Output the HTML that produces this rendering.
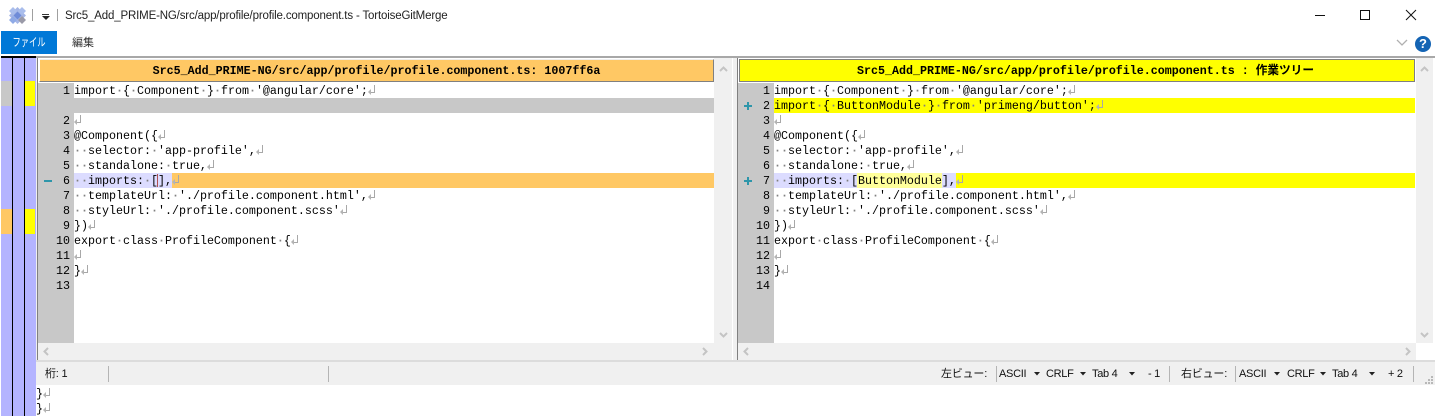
<!DOCTYPE html>
<html lang="ja"><head><meta charset="utf-8"><title>TortoiseGitMerge</title>
<style>
html,body{margin:0;padding:0;background:#fff}
body{position:relative;width:1435px;height:416px;overflow:hidden;font-family:"Liberation Sans","Noto Sans CJK JP",sans-serif;color:#000}
.a{position:absolute}
.t{position:absolute;white-space:pre;font-size:12px;line-height:16px}
.st{position:absolute;white-space:pre;top:366px;line-height:16px;font-size:11px;letter-spacing:-.3px;color:#111}
.jp{position:absolute;white-space:pre;top:366px;line-height:16px;font-size:11px;color:#111;letter-spacing:-.2px}
.c{position:absolute;white-space:pre;font-family:"Liberation Mono","Noto Sans CJK JP",monospace;font-size:11.67px;line-height:15px;height:15px;margin-top:1px}
.n{position:absolute;white-space:pre;font-family:"Liberation Mono",monospace;font-size:11.67px;line-height:15px;height:15px;width:30px;text-align:right;margin-top:1px}
.c u{text-decoration:none;color:#808080;font-weight:bold}
.c i{display:inline-block;position:relative;width:7px;height:15px;vertical-align:top}
.c i::before{content:"";position:absolute;left:1px;top:1px;width:6px;height:8px;border-right:1px solid #a8a8a8;border-bottom:1px solid #a8a8a8;box-sizing:border-box}
.c i::after{content:"";position:absolute;left:0;top:5px;width:0;height:0;border-top:3px solid transparent;border-bottom:3px solid transparent;border-right:3px solid #b4b4b4}
.h{position:absolute;top:59px;height:23px;line-height:23px;text-align:center;font-family:"Liberation Mono","Noto Sans CJK JP",monospace;font-size:11.67px;font-weight:bold;white-space:pre;box-sizing:border-box;border:1px solid #808080;border-top:1px solid #eee;border-left:1px solid #fff}
.s{position:absolute;width:1px;background:#b4b4b4;top:366px;height:16px}
</style></head><body>

<!-- title bar -->
<svg class="a" style="left:8px;top:6px" width="19" height="19" viewBox="0 0 19 19">
<path d="M9.500 1L18 9.500 9.500 18 1 9.500z" fill="#a5b6e6"/>
<path d="M5 1l4 4-4 4-4-4z" fill="#a9bdec"/><path d="M14 1l4 4-4 4-4-4z" fill="#a9bdec"/><path d="M5 10l4 4-4 4-4-4z" fill="#8faae6"/><path d="M14 10l4 4-4 4-4-4z" fill="#9a9aa8"/><path d="M9.500 5.500l4 4-4 4-4-4z" fill="#6f8cd8"/></svg>
<div class="a" style="left:32px;top:9px;width:1px;height:12px;background:#a0a0a0"></div>
<div class="a" style="left:42px;top:14px;width:7px;height:1px;background:#333"></div>
<svg class="a" style="left:42px;top:16px" width="8" height="5"><path d="M0 0h8L4 4z" fill="#222"/></svg>
<div class="a" style="left:57px;top:9px;width:1px;height:12px;background:#a0a0a0"></div>
<div class="t" style="left:65px;top:8px;color:#222;font-size:11.5px;letter-spacing:-.16px">Src5_Add_PRIME-NG/src/app/profile/profile.component.ts - TortoiseGitMerge</div>
<div class="a" style="left:1315px;top:15px;width:10px;height:1px;background:#111"></div>
<div class="a" style="left:1360px;top:10px;width:8px;height:8px;border:1px solid #111;box-sizing:content-box"></div>
<svg class="a" style="left:1405px;top:9px" width="12" height="12"><path d="M1 1l10 10M11 1L1 11" stroke="#111" stroke-width="1" fill="none"/></svg>

<!-- menu -->
<div class="a" style="left:1px;top:31px;width:56px;height:23px;background:#0078d7"></div>
<div class="t" style="left:1px;top:35px;width:56px;text-align:center;color:#fff;font-size:11.5px;transform:scaleX(.72)">ファイル</div>
<div class="t" style="left:72px;top:35px;color:#333;font-size:11px">編集</div>
<svg class="a" style="left:1396px;top:39px" width="12" height="8"><path d="M1 1l5 5 5-5" stroke="#b0b0b0" stroke-width="1.300" fill="none"/></svg>
<div class="a" style="left:1415px;top:36px;width:16px;height:16px;border-radius:50%;background:#1464b4;color:#fff;font-weight:bold;font-size:13px;line-height:16px;text-align:center">?</div>

<!-- top rule -->
<div class="a" style="left:36px;top:56px;width:1399px;height:2px;background:#a8a8a8"></div>

<!-- left location strip -->
<div class="a" style="left:1px;top:56px;width:35px;height:360px;background:#b4b4ff"></div>
<div class="a" style="left:1px;top:56px;width:35px;height:2px;background:#000"></div>
<div class="a" style="left:12px;top:56px;width:1px;height:360px;background:#000"></div>
<div class="a" style="left:24px;top:56px;width:1px;height:360px;background:#000"></div>
<div class="a" style="left:1px;top:81px;width:11px;height:25px;background:#c8c8c8"></div>
<div class="a" style="left:25px;top:81px;width:10px;height:25px;background:#ff0"></div>
<div class="a" style="left:1px;top:209px;width:11px;height:25px;background:#ffc864"></div>
<div class="a" style="left:25px;top:209px;width:10px;height:25px;background:#ff0"></div>

<!-- panes -->
<div class="a" style="left:36px;top:58px;width:2px;height:303px;background:#f0f0f0"></div>
<div class="a" style="left:37px;top:58px;width:1px;height:303px;background:#808080"></div>
<div class="a" style="left:38px;top:83px;width:36px;height:260px;background:#c8c8c8"></div>
<div class="a" style="left:738px;top:83px;width:36px;height:260px;background:#c8c8c8"></div>
<div class="a" style="left:714px;top:58px;width:18px;height:285px;background:#f0f0f0"></div>
<div class="a" style="left:1416px;top:58px;width:17px;height:285px;background:#f0f0f0"></div>
<div class="a" style="left:733px;top:58px;width:4px;height:303px;background:#f0f0f0"></div>
<div class="a" style="left:737px;top:58px;width:1px;height:303px;background:#808080"></div>
<div class="a" style="left:38px;top:343px;width:694px;height:17px;background:#f0f0f0"></div>
<div class="a" style="left:738px;top:343px;width:678px;height:17px;background:#f0f0f0"></div>
<div class="a" style="left:36px;top:360px;width:1399px;height:2px;background:#dcdcdc"></div>

<div class="h" style="left:39px;width:675px;background:#ffc864">Src5_Add_PRIME-NG/src/app/profile/profile.component.ts: 1007ff6a</div>
<div class="h" style="left:739px;width:676px;background:#ff0;border-top:1px solid #808080;border-left:1px solid #808080;padding-left:17px">Src5_Add_PRIME-NG/src/app/profile/profile.component.ts : 作業ツリー</div>

<!-- scroll arrows -->
<svg class="a" style="left:719px;top:66px" width="9" height="6"><path d="M1 5l3.500-3.500L8 5" stroke="#c4c4c4" stroke-width="2" fill="none"/></svg>
<svg class="a" style="left:719px;top:332px" width="9" height="6"><path d="M1 1l3.500 3.500L8 1" stroke="#c4c4c4" stroke-width="2" fill="none"/></svg>
<svg class="a" style="left:1420px;top:66px" width="9" height="6"><path d="M1 5l3.500-3.500L8 5" stroke="#c4c4c4" stroke-width="2" fill="none"/></svg>
<svg class="a" style="left:1420px;top:332px" width="9" height="6"><path d="M1 1l3.500 3.500L8 1" stroke="#c4c4c4" stroke-width="2" fill="none"/></svg>
<svg class="a" style="left:43px;top:347px" width="6" height="9"><path d="M5 1L1.500 4.500 5 8" stroke="#c4c4c4" stroke-width="2" fill="none"/></svg>
<svg class="a" style="left:702px;top:347px" width="6" height="9"><path d="M1 1l3.500 3.500L1 8" stroke="#c4c4c4" stroke-width="2" fill="none"/></svg>
<svg class="a" style="left:743px;top:347px" width="6" height="9"><path d="M5 1L1.500 4.500 5 8" stroke="#c4c4c4" stroke-width="2" fill="none"/></svg>
<svg class="a" style="left:1405px;top:347px" width="6" height="9"><path d="M1 1l3.500 3.500L1 8" stroke="#c4c4c4" stroke-width="2" fill="none"/></svg>

<!-- left highlights -->
<div class="a" style="left:74px;top:83px;width:300px;height:15px;background:#fff"></div>
<div class="a" style="left:74px;top:98px;width:640px;height:15px;background:#c8c8c8"></div>
<div class="a" style="left:74px;top:173px;width:98px;height:15px;background:#dcdcff"></div>
<div class="a" style="left:172px;top:173px;width:542px;height:15px;background:#ffc864"></div>
<div class="a" style="left:44px;top:180px;width:8px;height:2px;background:#2e96aa"></div>
<div class="a" style="left:157px;top:174px;width:1px;height:13px;background:#b05050"></div>

<!-- left numbers -->
<div class="n" style="left:40px;top:83px">1</div>
<div class="n" style="left:40px;top:113px">2</div>
<div class="n" style="left:40px;top:128px">3</div>
<div class="n" style="left:40px;top:143px">4</div>
<div class="n" style="left:40px;top:158px">5</div>
<div class="n" style="left:40px;top:173px">6</div>
<div class="n" style="left:40px;top:188px">7</div>
<div class="n" style="left:40px;top:203px">8</div>
<div class="n" style="left:40px;top:218px">9</div>
<div class="n" style="left:40px;top:233px">10</div>
<div class="n" style="left:40px;top:248px">11</div>
<div class="n" style="left:40px;top:263px">12</div>
<div class="n" style="left:40px;top:278px">13</div>

<!-- left code -->
<div class="c" style="left:74px;top:83px">import<u>·</u>{<u>·</u>Component<u>·</u>}<u>·</u>from<u>·</u>'@angular/core';<i></i></div>
<div class="c" style="left:74px;top:113px"><i></i></div>
<div class="c" style="left:74px;top:128px">@Component({<i></i></div>
<div class="c" style="left:74px;top:143px"><u>··</u>selector:<u>·</u>'app-profile',<i></i></div>
<div class="c" style="left:74px;top:158px"><u>··</u>standalone:<u>·</u>true,<i></i></div>
<div class="c" style="left:74px;top:173px"><u>··</u>imports:<u>·</u>[],<i></i></div>
<div class="c" style="left:74px;top:188px"><u>··</u>templateUrl:<u>·</u>'./profile.component.html',<i></i></div>
<div class="c" style="left:74px;top:203px"><u>··</u>styleUrl:<u>·</u>'./profile.component.scss'<i></i></div>
<div class="c" style="left:74px;top:218px">})<i></i></div>
<div class="c" style="left:74px;top:233px">export<u>·</u>class<u>·</u>ProfileComponent<u>·</u>{<i></i></div>
<div class="c" style="left:74px;top:248px"><i></i></div>
<div class="c" style="left:74px;top:263px">}<i></i></div>

<!-- right highlights -->
<div class="a" style="left:774px;top:98px;width:641px;height:15px;background:#ff0"></div>
<div class="a" style="left:774px;top:173px;width:83px;height:15px;background:#dcdcff"></div>
<div class="a" style="left:857px;top:173px;width:85px;height:15px;background:#ffff9b"></div>
<div class="a" style="left:942px;top:173px;width:14px;height:15px;background:#dcdcff"></div>
<div class="a" style="left:956px;top:173px;width:459px;height:15px;background:#ff0"></div>
<svg class="a" style="left:744px;top:102px" width="8" height="8"><path d="M0 3h3V0h2v3h3v2H5v3H3V5H0z" fill="#2e96aa"/></svg>
<svg class="a" style="left:744px;top:177px" width="8" height="8"><path d="M0 3h3V0h2v3h3v2H5v3H3V5H0z" fill="#2e96aa"/></svg>

<!-- right numbers -->
<div class="n" style="left:740px;top:83px">1</div>
<div class="n" style="left:740px;top:98px">2</div>
<div class="n" style="left:740px;top:113px">3</div>
<div class="n" style="left:740px;top:128px">4</div>
<div class="n" style="left:740px;top:143px">5</div>
<div class="n" style="left:740px;top:158px">6</div>
<div class="n" style="left:740px;top:173px">7</div>
<div class="n" style="left:740px;top:188px">8</div>
<div class="n" style="left:740px;top:203px">9</div>
<div class="n" style="left:740px;top:218px">10</div>
<div class="n" style="left:740px;top:233px">11</div>
<div class="n" style="left:740px;top:248px">12</div>
<div class="n" style="left:740px;top:263px">13</div>
<div class="n" style="left:740px;top:278px">14</div>

<!-- right code -->
<div class="c" style="left:774px;top:83px">import<u>·</u>{<u>·</u>Component<u>·</u>}<u>·</u>from<u>·</u>'@angular/core';<i></i></div>
<div class="c" style="left:774px;top:98px">import<u>·</u>{<u>·</u>ButtonModule<u>·</u>}<u>·</u>from<u>·</u>'primeng/button';<i></i></div>
<div class="c" style="left:774px;top:113px"><i></i></div>
<div class="c" style="left:774px;top:128px">@Component({<i></i></div>
<div class="c" style="left:774px;top:143px"><u>··</u>selector:<u>·</u>'app-profile',<i></i></div>
<div class="c" style="left:774px;top:158px"><u>··</u>standalone:<u>·</u>true,<i></i></div>
<div class="c" style="left:774px;top:173px"><u>··</u>imports:<u>·</u>[ButtonModule],<i></i></div>
<div class="c" style="left:774px;top:188px"><u>··</u>templateUrl:<u>·</u>'./profile.component.html',<i></i></div>
<div class="c" style="left:774px;top:203px"><u>··</u>styleUrl:<u>·</u>'./profile.component.scss'<i></i></div>
<div class="c" style="left:774px;top:218px">})<i></i></div>
<div class="c" style="left:774px;top:233px">export<u>·</u>class<u>·</u>ProfileComponent<u>·</u>{<i></i></div>
<div class="c" style="left:774px;top:248px"><i></i></div>
<div class="c" style="left:774px;top:263px">}<i></i></div>

<!-- status bar -->
<div class="a" style="left:36px;top:362px;width:1399px;height:23px;background:#f0f0f0"></div>
<div class="jp" style="left:45px">桁: 1</div>
<div class="s" style="left:108px"></div>
<div class="s" style="left:328px"></div>
<div class="jp" style="left:941px">左ビュー:</div>
<div class="s" style="left:996px"></div>
<div class="st" style="left:999px">ASCII</div>
<svg class="a" style="left:1034px;top:372px" width="6" height="4"><path d="M0 0h6L3 3.500z" fill="#222"/></svg>
<div class="st" style="left:1046px">CRLF</div>
<svg class="a" style="left:1080px;top:372px" width="6" height="4"><path d="M0 0h6L3 3.500z" fill="#222"/></svg>
<div class="st" style="left:1092px">Tab 4</div>
<svg class="a" style="left:1129px;top:372px" width="6" height="4"><path d="M0 0h6L3 3.500z" fill="#222"/></svg>
<div class="st" style="left:1148px">- 1</div>
<div class="s" style="left:1169px"></div>
<div class="jp" style="left:1181px">右ビュー:</div>
<div class="s" style="left:1235px"></div>
<div class="st" style="left:1239px">ASCII</div>
<svg class="a" style="left:1274px;top:372px" width="6" height="4"><path d="M0 0h6L3 3.500z" fill="#222"/></svg>
<div class="st" style="left:1287px">CRLF</div>
<svg class="a" style="left:1320px;top:372px" width="6" height="4"><path d="M0 0h6L3 3.500z" fill="#222"/></svg>
<div class="st" style="left:1332px">Tab 4</div>
<svg class="a" style="left:1369px;top:372px" width="6" height="4"><path d="M0 0h6L3 3.500z" fill="#222"/></svg>
<div class="st" style="left:1388px">+ 2</div>
<div class="s" style="left:1413px"></div>
<svg class="a" style="left:1424px;top:375px" width="10" height="10"><path d="M7 1h2v2H7zM4 4h2v2H4zM7 4h2v2H7zM1 7h2v2H1zM4 7h2v2H4zM7 7h2v2H7z" fill="#b8b8b8"/></svg>

<!-- bottom pane -->
<div class="c" style="left:36px;top:386px">}<i></i></div>
<div class="c" style="left:36px;top:401px">}<i></i></div>
</body></html>
